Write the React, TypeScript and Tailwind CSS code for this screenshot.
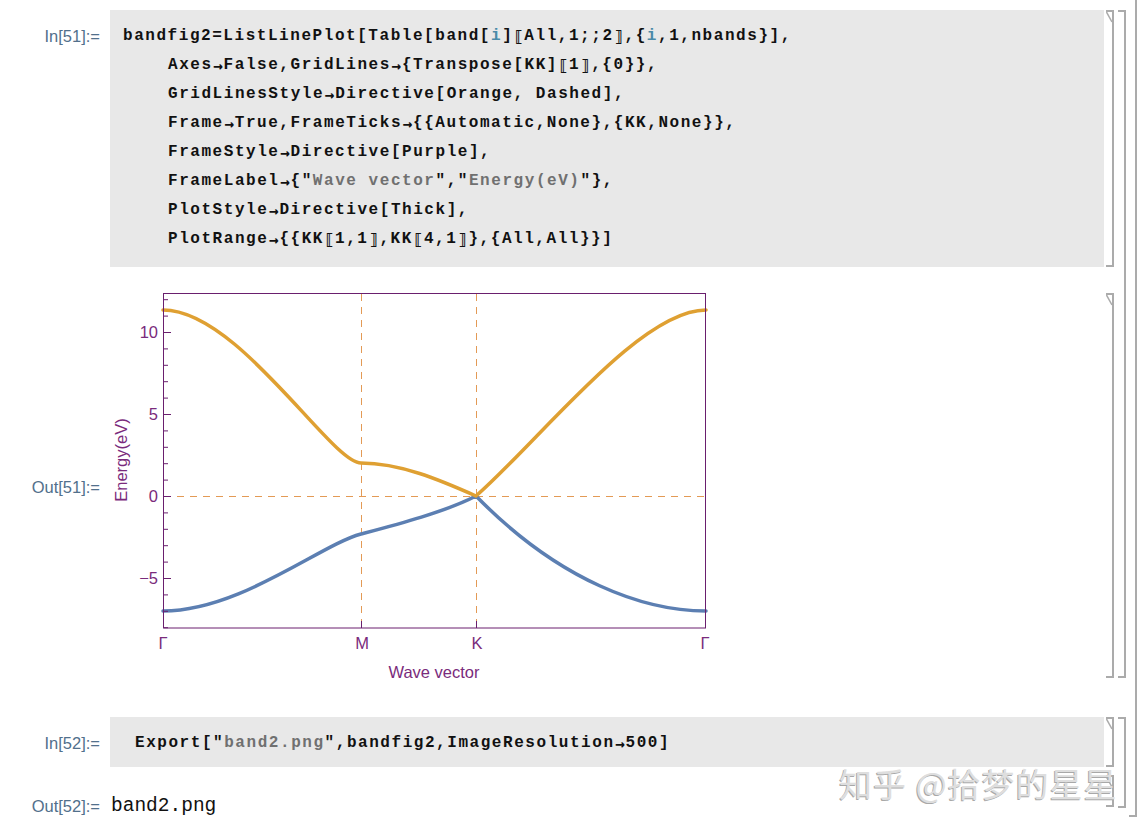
import React from 'react';

const yOf = (e: number) => 496 - 16.4 * e;
const PURPLE = '#6a1f6e';
const LABEL = '#7a2b7c';

// band paths in page coordinates (plot svg uses a matching viewBox)
const ORANGE = [
  'M163,310 C238,310 331,463 361,463',
  'C400,463 440,480 476,496',
  'M476,496 C540,440 640,310 706,310',
];
const BLUE = [
  'M163,611 C240,611 320,545 361,534',
  'C395,525 445,512 476,496',
  'M476,496 C560,582 645,611 706,611',
];

const Bracket: React.FC<{ className?: string; marker?: boolean }> = ({ className = '', marker }) => (
  <div className={`relative w-[8px] border-y-2 border-r-2 border-[#ababab] ${className}`}>
    {marker && (
      <svg className="absolute left-0 top-0" width="8" height="12" viewBox="0 0 8 12">
        <path d="M0.5 0 L6 10" stroke="#ababab" strokeWidth="1.5" fill="none" />
      </svg>
    )}
  </div>
);

const Label: React.FC<{ text: string; className?: string }> = ({ text, className = '' }) => (
  <div className={`w-[110px] shrink-0 pr-[10px] text-right leading-[29px] text-[16.5px] text-[#52708c] font-['Liberation_Sans',sans-serif] ${className}`}>
    {text}
  </div>
);

const Var: React.FC<{ children: React.ReactNode }> = ({ children }) => <span className="text-[#4a8aa8]">{children}</span>;
const Str: React.FC<{ children: React.ReactNode }> = ({ children }) => (
  <>
    "<span className="text-[#707070]">{children}</span>"
  </>
);
// glyphs Liberation Mono lacks or draws tiny: fixed cell, align-top keeps the 29px line box
const Glyph: React.FC<{ c: string }> = ({ c }) => (
  <span className="inline-block w-[11px] h-[29px] align-top text-center tracking-normal leading-[29px] font-['DejaVu_Sans_Mono','DejaVu_Sans',monospace]">
    {c}
  </span>
);
const Ar = () => <Glyph c="→" />;
const LB = () => <Glyph c="⟦" />;
const RB = () => <Glyph c="⟧" />;

const codeCls = "font-['Liberation_Mono','DejaVu_Sans_Mono',monospace] font-bold text-[16px] tracking-[1.55px] leading-[29px] text-[#111] whitespace-pre";

const BandPlot: React.FC = () => {
  const ticks: number[] = [];
  for (let e = -8; e <= 12; e++) ticks.push(e);
  return (
    <svg width="610" height="385" viewBox="110 293 610 385" className="overflow-visible" fontFamily="'Liberation Sans', Arial, sans-serif">
      {/* grid */}
      <g stroke="#e39a55" strokeWidth="1" strokeDasharray="7 6" fill="none">
        <line x1="361.5" y1="294" x2="361.5" y2="628" />
        <line x1="476.5" y1="294" x2="476.5" y2="628" />
        <line x1="164" y1="496.5" x2="706" y2="496.5" />
      </g>
      {/* bands */}
      <g fill="none" strokeWidth="3.5" strokeLinejoin="round" strokeLinecap="round">
        <path d={BLUE.join(' ')} stroke="#5c7fb2" />
        <path d={ORANGE.join(' ')} stroke="#dfa032" />
      </g>
      {/* frame */}
      <rect x="163.5" y="293.5" width="542" height="334.5" fill="none" stroke={PURPLE} strokeWidth="1" />
      <g stroke={PURPLE} strokeWidth="1">
        {ticks.map(e => (
          <line key={e} x1="164" x2={e % 5 === 0 ? 171 : 168} y1={yOf(e) + 0.5} y2={yOf(e) + 0.5} />
        ))}
        <line x1="361.5" x2="361.5" y1="628" y2="621" />
        <line x1="476.5" x2="476.5" y1="628" y2="621" />
      </g>
      <g fill={LABEL} fontSize="16.5" textAnchor="end" dominantBaseline="central">
        <text x="158" y={yOf(10)}>10</text>
        <text x="158" y={yOf(5)}>5</text>
        <text x="158" y={yOf(0)}>0</text>
        <text x="158" y={yOf(-5)}>−5</text>
      </g>
      <g fill={LABEL} fontSize="16.5" textAnchor="middle" dominantBaseline="central">
        <text x="163" y="643">Γ</text>
        <text x="362" y="643">M</text>
        <text x="477" y="643">K</text>
        <text x="705" y="643">Γ</text>
        <text x="434" y="672">Wave vector</text>
        <text x="121" y="460" transform="rotate(-90 121 460)">Energy(eV)</text>
      </g>
    </svg>
  );
};

const App: React.FC = () => {
  return (
    <div className="relative flex w-[1145px] h-[831px] overflow-hidden bg-white">
      <div className="w-[1126px] shrink-0 flex flex-col pt-[10px]">
        {/* In[51] / Out[51] group */}
        <div className="flex">
          <div className="w-[1114px] flex flex-col">
            <div className="flex">
              <Label text="In[51]:=" className="pt-[12px]" />
              <div className={`w-[994px] h-[257px] bg-[#e8e8e8] pt-[12px] pl-[13px] ${codeCls}`}>
                <div className="h-[29px]">
                  bandfig2=ListLinePlot[Table[band[<Var>i</Var>]<LB />All,1;;2<RB />,{'{'}<Var>i</Var>,1,nbands{'}'}],
                </div>
                <div className="h-[29px] pl-[45px]">Axes<Ar />False,GridLines<Ar />{'{'}Transpose[KK]<LB />1<RB />,{'{'}0{'}'}{'}'},</div>
                <div className="h-[29px] pl-[45px]">GridLinesStyle<Ar />Directive[Orange, Dashed],</div>
                <div className="h-[29px] pl-[45px]">Frame<Ar />True,FrameTicks<Ar />{'{'}{'{'}Automatic,None{'}'},{'{'}KK,None{'}'}{'}'},</div>
                <div className="h-[29px] pl-[45px]">FrameStyle<Ar />Directive[Purple],</div>
                <div className="h-[29px] pl-[45px]">
                  FrameLabel<Ar />{'{'}<Str>Wave vector</Str>,<Str>Energy(eV)</Str>{'}'},
                </div>
                <div className="h-[29px] pl-[45px]">PlotStyle<Ar />Directive[Thick],</div>
                <div className="h-[29px] pl-[45px]">PlotRange<Ar />{'{'}{'{'}KK<LB />1,1<RB />,KK<LB />4,1<RB />{'}'},{'{'}All,All{'}'}{'}'}]</div>
              </div>
              <Bracket className="ml-[2px]" marker />
            </div>

            <div className="flex mt-[26px] h-[385px]">
              <Label text="Out[51]:=" className="pt-[180px]" />
              <div className="w-[994px]">
                <BandPlot />
              </div>
              <Bracket className="ml-[2px]" marker />
            </div>
          </div>
          <Bracket className="ml-[4px]" />
        </div>

        {/* In[52] / Out[52] group */}
        <div className="flex mt-[39px]">
          <div className="w-[1114px] flex flex-col">
            <div className="flex">
              <Label text="In[52]:=" className="pt-[12px]" />
              <div className={`w-[994px] h-[50px] bg-[#e8e8e8] pt-[12px] pl-[25px] ${codeCls}`}>
                Export[<Str>band2.png</Str>,bandfig2,ImageResolution<Ar />500]
              </div>
              <Bracket className="ml-[2px]" marker />
            </div>
            <div className="flex items-start mt-[8px]">
              <Label text="Out[52]:=" className="pt-[17px]" />
              <div className="w-[994px] pt-[17px] pl-[1px] font-['Liberation_Mono',monospace] text-[19.5px] leading-[29px] text-[#111]">
                band2.png
              </div>
              <Bracket className="ml-[2px] h-[32px]" marker />
            </div>
          </div>
          <Bracket className="ml-[4px] self-start h-[91px]" />
        </div>
      </div>

      {/* outermost notebook bracket */}
      <div className="ml-[3px] w-[8px] h-[817px] border-r-2 border-b-2 border-[#ababab]" />

      {/* watermark */}
      <div className="absolute left-[839px] top-[767px] whitespace-pre tracking-[1px] font-['Noto_Sans_CJK_SC',sans-serif] text-[33px] leading-[33px] text-[#dedede] [text-shadow:-1px_1px_0_#a8a8a8]">
        知乎 @拾梦的星星
      </div>
    </div>
  );
};

export default App;
